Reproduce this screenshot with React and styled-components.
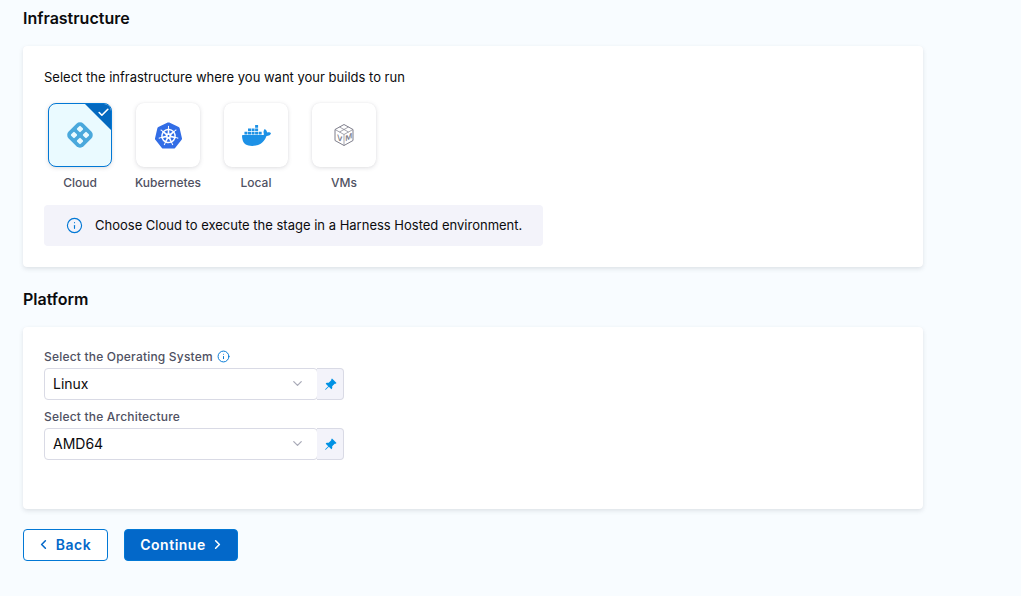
import React, { useState } from 'react';
import styled, { createGlobalStyle } from 'styled-components';
import { SiKubernetes, SiDocker } from 'react-icons/si';
import { BsPinAngleFill } from 'react-icons/bs';
import { ChevronDown, ChevronLeft, ChevronRight, Info, Check } from 'lucide-react';

const GlobalStyle = createGlobalStyle`
  html, body { margin: 0; padding: 0; height: 100%; }
  body {
    background: #f8fcff;
    font-family: Inter, "Liberation Sans", sans-serif;
    color: #0b0b0d;
    -webkit-font-smoothing: antialiased;
  }
`;

const Page = styled.div`
  width: 900px;
  padding: 10px 0 0 23px;
`;

const SectionTitle = styled.h2`
  margin: 0;
  height: 18px;
  font-size: 16px;
  line-height: 16px;
  font-weight: 600;
  color: #0b0b0d;
`;

const Card = styled.section`
  box-sizing: border-box;
  height: ${p => p.$height}px;
  margin-top: 18px;
  margin-bottom: 24px;
  padding: ${p => p.$top}px 21px 0;
  background: #fff;
  border-radius: 4px;
  box-shadow: 0 0 1px rgba(40, 41, 61, 0.04), 0 2px 4px rgba(96, 97, 112, 0.16);
`;

const Prompt = styled.p`
  margin: 0;
  font-size: 13px;
  line-height: 16px;
  color: #0b0b0d;
`;

const TileRow = styled.div`
  display: flex;
  gap: 24px;
  margin: 18px 0 0 4px;
`;

const TileColumn = styled.div`
  width: 64px;
  display: flex;
  flex-direction: column;
  align-items: center;
`;

const Tile = styled.div`
  position: relative;
  box-sizing: border-box;
  width: 64px;
  height: 64px;
  display: flex;
  align-items: center;
  justify-content: center;
  overflow: hidden;
  border-radius: 8px;
  background: ${p => (p.$selected ? '#eafaff' : '#fff')};
  border: ${p => (p.$selected ? '1px solid #0278d5' : 'none')};
  box-shadow: 0 0 1px rgba(40, 41, 61, 0.08), 0 1px 4px rgba(96, 97, 112, 0.2);
`;

const Corner = styled.span`
  position: absolute;
  top: 0;
  right: 0;
  width: 0;
  height: 0;
  border-top: 26px solid #0368bf;
  border-left: 26px solid transparent;
`;

const CornerCheck = styled(Check)`
  position: absolute;
  top: 2px;
  right: 1px;
  color: #fff;
`;

const TileLabel = styled.span`
  margin-top: 9px;
  font-size: 12px;
  line-height: 14px;
  font-weight: 500;
  white-space: nowrap;
  color: #4f5162;
`;

const InfoBar = styled.div`
  box-sizing: border-box;
  width: 499px;
  height: 41px;
  margin-top: 15px;
  padding: 0 0 1px 22px;
  display: flex;
  align-items: center;
  gap: 12px;
  border-radius: 4px;
  background: #f3f3fa;
  font-size: 13px;
  color: #0b0b0d;
`;

const InfoIcon = styled(Info)`
  flex: none;
  color: #0278d5;
`;

const FieldLabel = styled.label`
  box-sizing: border-box;
  display: flex;
  align-items: center;
  gap: 4px;
  height: 16px;
  padding-bottom: 2px;
  font-size: 12px;
  font-weight: 500;
  letter-spacing: 0.2px;
  color: #4f5162;
`;

const Field = styled.div`
  margin-bottom: 9px;
`;

const FieldRow = styled.div`
  display: flex;
  width: 300px;
  height: 32px;
  margin-top: 3px;
`;

const SelectBox = styled.div`
  box-sizing: border-box;
  flex: 1;
  display: flex;
  align-items: center;
  justify-content: space-between;
  padding: 0 12px 2px 8px;
  background: #fff;
  border: 1px solid #d9dae5;
  border-radius: 4px;
  font-size: 14px;
  color: #0b0b0d;
`;

const PinBox = styled.div`
  box-sizing: border-box;
  width: 27px;
  margin-left: -1px;
  display: flex;
  align-items: center;
  justify-content: center;
  background: #f3f3fa;
  border: 1px solid #d9dae5;
  border-left: none;
  border-radius: 0 4px 4px 0;
  color: #0092e4;
`;

const Footer = styled.div`
  display: flex;
  gap: 16px;
  margin-top: -4px;
`;

const Button = styled.button`
  box-sizing: border-box;
  height: 32px;
  width: ${p => p.$width}px;
  display: flex;
  align-items: center;
  justify-content: center;
  gap: ${p => (p.$primary ? 4 : 5)}px;
  padding: ${p => (p.$primary ? '0 0 2px 3px' : '0 4px 2px 0')};
  border-radius: 4px;
  border: 1px solid #0278d5;
  background: ${p => (p.$primary ? '#0368c9' : '#fff')};
  color: ${p => (p.$primary ? '#fff' : '#0368c9')};
  font-family: inherit;
  font-size: 14px;
  font-weight: 600;
  letter-spacing: 0.5px;
  cursor: pointer;
`;

const CloudIcon = () => (
  <svg width="30" height="30" viewBox="0 0 30 30">
    <rect x="4.5" y="4.5" width="21" height="21" rx="5" fill="#4aa8dc" transform="rotate(45 15 15)" />
    <g fill="#eafaff">
      <rect x="12.5" y="6.5" width="5" height="5" rx="1" transform="rotate(45 15 9)" />
      <rect x="12.5" y="18.5" width="5" height="5" rx="1" transform="rotate(45 15 21)" />
      <rect x="6.5" y="12.5" width="5" height="5" rx="1" transform="rotate(45 9 15)" />
      <rect x="18.5" y="12.5" width="5" height="5" rx="1" transform="rotate(45 21 15)" />
    </g>
  </svg>
);

const VmIcon = () => (
  <svg width="22" height="24" viewBox="0 0 22 24" fill="none" stroke="#7f7f8c" strokeWidth="1">
    <path d="M11 1.5 20 6.5v11L11 22.5 2 17.5v-11z" />
    <path d="M2 6.5 11 11.5 20 6.5M11 11.5v11M6.5 4 15.5 9M15.5 4 6.5 9" strokeWidth="0.7" />
    <text x="0" y="0" transform="translate(4 16.5) skewY(28)" fontSize="7.5" fontWeight="600" fill="#7f7f8c" stroke="none" fontFamily="Inter, sans-serif">V</text>
    <text x="0" y="0" transform="translate(12.2 18.5) skewY(-28)" fontSize="7.5" fontWeight="600" fill="#7f7f8c" stroke="none" fontFamily="Inter, sans-serif">M</text>
  </svg>
);

const tiles = [
  { name: 'Cloud', icon: <CloudIcon /> },
  { name: 'Kubernetes', icon: <SiKubernetes size={27} color="#326de6" /> },
  { name: 'Local', icon: <SiDocker size={29} color="#1d91e6" /> },
  { name: 'VMs', icon: <VmIcon /> }
];

const App = () => {
  const [selected] = useState('Cloud');

  return (
    <Page>
      <GlobalStyle />
      <SectionTitle>Infrastructure</SectionTitle>
      <Card $height={221} $top={23}>
        <Prompt>Select the infrastructure where you want your builds to run</Prompt>
        <TileRow>
          {tiles.map(tile => (
            <TileColumn key={tile.name}>
              <Tile $selected={tile.name === selected}>
                {tile.icon}
                {tile.name === selected && (
                  <>
                    <Corner />
                    <CornerCheck size={13} strokeWidth={3} />
                  </>
                )}
              </Tile>
              <TileLabel>{tile.name}</TileLabel>
            </TileColumn>
          ))}
        </TileRow>
        <InfoBar>
          <InfoIcon size={17} strokeWidth={1.6} />
          Choose Cloud to execute the stage in a Harness Hosted environment.
        </InfoBar>
      </Card>
      <SectionTitle>Platform</SectionTitle>
      <Card $height={182} $top={22}>
        <Field>
          <FieldLabel>
            Select the Operating System
            <Info size={13} color="#0278d5" strokeWidth={1.8} />
          </FieldLabel>
          <FieldRow>
            <SelectBox>
              Linux
              <ChevronDown size={15} color="#a9aab8" />
            </SelectBox>
            <PinBox>
              <BsPinAngleFill size={13} />
            </PinBox>
          </FieldRow>
        </Field>
        <Field>
          <FieldLabel>Select the Architecture</FieldLabel>
          <FieldRow>
            <SelectBox>
              AMD64
              <ChevronDown size={15} color="#a9aab8" />
            </SelectBox>
            <PinBox>
              <BsPinAngleFill size={13} />
            </PinBox>
          </FieldRow>
        </Field>
      </Card>
      <Footer>
        <Button $width={85}>
          <ChevronLeft size={15} strokeWidth={2.5} />
          Back
        </Button>
        <Button $primary $width={114}>
          Continue
          <ChevronRight size={15} strokeWidth={2.5} />
        </Button>
      </Footer>
    </Page>
  );
};

export default App;
